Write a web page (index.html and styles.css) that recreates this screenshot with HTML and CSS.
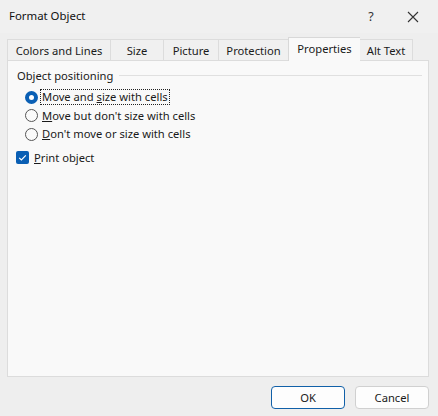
FILE: index.html
```html
<!DOCTYPE html>
<html lang="en">
<head>
    <meta charset="UTF-8">
    <title>Format Object</title>
    <link rel="stylesheet" href="styles.css">
</head>
<body>
    <div class="dialog">
        <div class="titlebar">
            <span class="title">Format Object</span>
            <span class="help">?</span>
            <span class="close">
                <svg width="12" height="12" viewBox="0 0 12 12"><path d="M1 1 L11 11 M11 1 L1 11" stroke="#333" stroke-width="1.1" fill="none"/></svg>
            </span>
        </div>
        <div class="tabs">
            <div class="tab t-colors">Colors and Lines</div>
            <div class="tab t-size">Size</div>
            <div class="tab t-picture">Picture</div>
            <div class="tab t-protection">Protection</div>
            <div class="tab t-properties active">Properties</div>
            <div class="tab t-alt">Alt Text</div>
        </div>
        <div class="panel">
            <div class="group-title">
                <span>Object positioning</span>
                <div class="rule"></div>
            </div>
            <div class="options">
                <div class="option">
                    <span class="radio checked"></span>
                    <span class="label focus">Move and <u>s</u>ize with cells</span>
                </div>
                <div class="option">
                    <span class="radio"></span>
                    <span class="label"><u>M</u>ove but don't size with cells</span>
                </div>
                <div class="option">
                    <span class="radio"></span>
                    <span class="label"><u>D</u>on't move or size with cells</span>
                </div>
            </div>
            <div class="check-row">
                <span class="checkbox">
                    <svg width="13" height="13" viewBox="0 0 13 13"><path d="M3.2 6.8 L5.4 9 L9.8 4.4" stroke="#fff" stroke-width="1.2" fill="none"/></svg>
                </span>
                <span class="label"><u>P</u>rint object</span>
            </div>
        </div>
        <div class="buttons">
            <button class="btn default">OK</button>
            <button class="btn">Cancel</button>
        </div>
    </div>
</body>
</html>
```
FILE: styles.css
```css
body {
    margin: 0;
    padding: 0;
    font-family: "Noto Sans", "Open Sans", sans-serif;
    font-size: 11.2px;
    color: #1a1a1a;
}
.dialog {
    width: 438px;
    height: 416px;
    background-color: #eeeeee;
    box-sizing: border-box;
    display: flex;
    flex-direction: column;
}
.titlebar {
    height: 33px;
    display: flex;
    align-items: center;
    background-color: #f0f0f0;
}
.title {
    margin-left: 9px;
    margin-top: -2px;
    font-size: 11.4px;
    flex: 1;
    color: #111;
}
.help {
    width: 16px;
    text-align: center;
    margin-right: 28px;
    font-size: 12.5px;
    color: #333;
}
.close {
    width: 12px;
    height: 12px;
    margin-right: 19px;
    display: flex;
}
.tabs {
    display: flex;
    align-items: flex-end;
    margin-left: 7px;
    height: 27px;
}
.tab {
    height: 21px;
    border: 1px solid #dcdcdc;
    border-bottom: none;
    border-right: none;
    background-color: #f0f0f0;
    display: flex;
    align-items: center;
    justify-content: center;
    box-sizing: border-box;
}
.t-colors { width: 103px; }
.t-size { width: 53px; }
.t-picture { width: 55px; }
.t-protection { width: 70px; }
.t-properties { width: 72px; }
.t-alt { width: 53px; border-right: 1px solid #dcdcdc; }
.tab.active {
    height: 24px;
    background-color: #f9f9f9;
    margin-bottom: -1px;
    position: relative;
    padding-bottom: 3px;
    border-color: #d8d8d8;
}
.tab.active + .tab {
    border-left: none;
}
.panel {
    margin-left: 7px;
    width: 422px;
    height: 317px;
    background-color: #f9f9f9;
    border: 1px solid #dcdcdc;
    box-sizing: border-box;
    padding: 7px 8px 0 8px;
}
.group-title {
    display: flex;
    align-items: center;
    height: 15px;
    padding-left: 1px;
}
.rule {
    flex: 1;
    height: 1px;
    background-color: #e0e0e0;
    margin-left: 6px;
    margin-right: -2px;
}
.options {
    margin-top: 5px;
    padding-left: 9px;
    display: flex;
    flex-direction: column;
}
.option {
    display: flex;
    align-items: center;
    height: 18.5px;
}
.radio {
    width: 13px;
    height: 13px;
    border: 1px solid #555;
    border-radius: 50%;
    box-sizing: border-box;
    background-color: #fafafa;
    margin-right: 2px;
}
.radio.checked {
    border: 4px solid #0a5fb4;
    background-color: #ffffff;
}
.label {
    padding: 0 1px;
    border: 1px dotted transparent;
    line-height: 14px;
}
.label.focus {
    border-color: #222;
}
.check-row {
    display: flex;
    align-items: center;
    margin-top: 5px;
    height: 18px;
}
.checkbox {
    width: 13px;
    height: 13px;
    background-color: #0a5fb4;
    border-radius: 2px;
    display: flex;
    margin-right: 3px;
}
.buttons {
    display: flex;
    justify-content: flex-end;
    gap: 10px;
    padding: 9px 9px 0 0;
}
.btn {
    width: 74px;
    height: 23px;
    font-family: "Noto Sans", "Open Sans", sans-serif;
    font-size: 11.2px;
    color: #1a1a1a;
    background-color: #fdfdfd;
    border: 1px solid #d0d0d0;
    border-radius: 4px;
    padding: 0;
}
.btn.default {
    border: 1px solid #1160a8;
}
```
